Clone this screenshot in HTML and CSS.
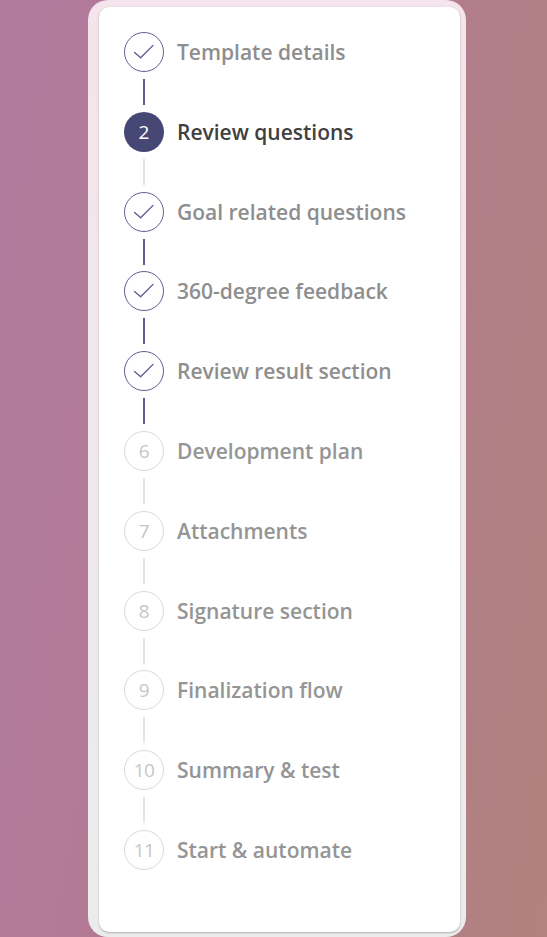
FILE: index.html
```html
<!DOCTYPE html>
<html>
<head>
<meta charset="utf-8">
<link rel="stylesheet" href="styles.css">
</head>
<body>
<div class="frame">
  <div class="card">
    <ol class="steps">
      <li class="step done">
        <div class="rail">
          <span class="dot"><svg viewBox="0 0 40 40" width="40" height="40"><path d="M10 20.5 L16.5 26 L29.5 13" /></svg></span>
          <span class="line"></span>
        </div>
        <span class="label">Template details</span>
      </li>
      <li class="step active">
        <div class="rail">
          <span class="dot">2</span>
          <span class="line grey"></span>
        </div>
        <span class="label">Review questions</span>
      </li>
      <li class="step done">
        <div class="rail">
          <span class="dot"><svg viewBox="0 0 40 40" width="40" height="40"><path d="M10 20.5 L16.5 26 L29.5 13" /></svg></span>
          <span class="line"></span>
        </div>
        <span class="label">Goal related questions</span>
      </li>
      <li class="step done">
        <div class="rail">
          <span class="dot"><svg viewBox="0 0 40 40" width="40" height="40"><path d="M10 20.5 L16.5 26 L29.5 13" /></svg></span>
          <span class="line"></span>
        </div>
        <span class="label">360-degree feedback</span>
      </li>
      <li class="step done">
        <div class="rail">
          <span class="dot"><svg viewBox="0 0 40 40" width="40" height="40"><path d="M10 20.5 L16.5 26 L29.5 13" /></svg></span>
          <span class="line"></span>
        </div>
        <span class="label">Review result section</span>
      </li>
      <li class="step todo">
        <div class="rail">
          <span class="dot">6</span>
          <span class="line grey"></span>
        </div>
        <span class="label">Development plan</span>
      </li>
      <li class="step todo">
        <div class="rail">
          <span class="dot">7</span>
          <span class="line grey"></span>
        </div>
        <span class="label">Attachments</span>
      </li>
      <li class="step todo">
        <div class="rail">
          <span class="dot">8</span>
          <span class="line grey"></span>
        </div>
        <span class="label">Signature section</span>
      </li>
      <li class="step todo">
        <div class="rail">
          <span class="dot">9</span>
          <span class="line grey"></span>
        </div>
        <span class="label">Finalization flow</span>
      </li>
      <li class="step todo">
        <div class="rail">
          <span class="dot">10</span>
          <span class="line grey"></span>
        </div>
        <span class="label">Summary &amp; test</span>
      </li>
      <li class="step todo last">
        <div class="rail">
          <span class="dot">11</span>
        </div>
        <span class="label">Start &amp; automate</span>
      </li>
    </ol>
  </div>
</div>
</body>
</html>
```
FILE: styles.css
```css
html, body {
  margin: 0;
  padding: 0;
  height: 937px;
  overflow: hidden;
}
body {
  background: linear-gradient(100deg, #b27b9e 0%, #b27a94 40%, #b1827e 100%);
  font-family: "Open Sans", "Noto Sans", sans-serif;
}
.frame {
  margin-left: 88px;
  width: 378px;
  height: 937px;
  box-sizing: border-box;
  padding: 7px 6px 5px 11px;
  border-radius: 20px;
  background: linear-gradient(180deg, #f4e4ec 0%, #efe8ec 50%, #ececec 100%);
}
.card {
  height: 100%;
  box-sizing: border-box;
  background: #ffffff;
  border-radius: 10px;
  box-shadow: 0 1px 2px rgba(0,0,0,0.25), 0 0 1px rgba(0,0,0,0.12);
  padding: 25px 0 0 25px;
}
.steps {
  list-style: none;
  margin: 0;
  padding: 0;
}
.step {
  display: flex;
  align-items: flex-start;
  gap: 13px;
  height: 79.8px;
}
.step.last { height: 40px; }
.rail {
  width: 40px;
  display: flex;
  flex-direction: column;
  align-items: center;
}
.dot {
  width: 40px;
  height: 40px;
  box-sizing: border-box;
  border-radius: 50%;
  display: flex;
  align-items: center;
  justify-content: center;
  font-size: 19px;
  font-weight: 400;
  font-family: "Open Sans", "Noto Sans", sans-serif;
}
.dot svg { display: block; }
.dot svg path {
  fill: none;
  stroke: #5a5b8e;
  stroke-width: 1.4;
  stroke-linecap: round;
  stroke-linejoin: round;
}
.done .dot {
  border: 1.3px solid #5f6092;
}
.active .dot {
  background: #464775;
  color: #ffffff;
}
.todo .dot {
  border: 1.3px solid #dadada;
  color: #c6c6c6;
  letter-spacing: -0.5px;
}
.line {
  display: block;
  width: 1.3px;
  height: 26px;
  margin-top: 7px;
  background: #5d5e8f;
}
.line.grey {
  background: #e4e4e4;
}
.label {
  line-height: 40px;
  font-size: 21px;
  font-weight: 600;
  color: #8e8e8e;
  letter-spacing: 0;
  white-space: nowrap;
}
.active .label {
  color: #404040;
}
.todo .label {
  color: #959595;
}
```
